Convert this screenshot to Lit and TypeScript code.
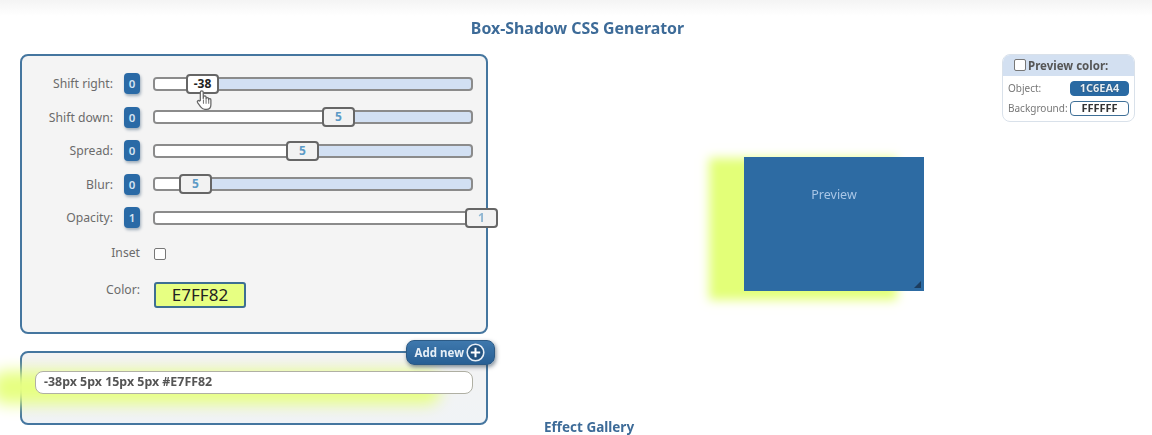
import { LitElement, html, css } from "lit";
import { customElement } from "lit/decorators.js";

const sliders = [
  { label: "Shift right:", badge: "0", value: "-38", left: 33, active: true },
  { label: "Shift down:", badge: "0", value: "5", left: 169 },
  { label: "Spread:", badge: "0", value: "5", left: 133 },
  { label: "Blur:", badge: "0", value: "5", left: 26 },
  { label: "Opacity:", badge: "1", value: "1", left: 312, faint: true },
];

@customElement("app-root")
export class AppRoot extends LitElement {
  static styles = css`
    :host {
      display: block;
      width: 1152px;
      height: 435px;
      overflow: hidden;
      background: #fff;
      font-family: "Noto Sans", "Open Sans", sans-serif;
      color: #666;
    }
    * { box-sizing: border-box; }
    .page { height: 435px; filter: blur(0.35px); background: linear-gradient(#f4f4f4 0, #fff 16px); background-repeat: no-repeat; }
    .title {
      height: 54px;
      padding: 18px 0 0 3px;
      text-align: center;
      font-size: 15.9px;
      line-height: 20px;
      font-weight: 700;
      color: #3d6b98;
    }
    .main { display: flex; }
    .left { width: 468px; margin-left: 20px; flex: none; }
    .panel {
      position: relative;
      background: #f4f4f4;
      border: 2px solid #45769f;
      border-radius: 8px;
    }
    .controls { height: 280px; padding-top: 11px; }
    .row {
      display: grid;
      grid-template-columns: 91px 16px 320px;
      column-gap: 11px;
      height: 33.5px;
      align-items: center;
    }
    .row > .track { margin-left: 2px; }
    .label { text-align: right; font-size: 12.2px; line-height: 16px; padding-top: 1px; color: #6b6b6b; }
    .badge {
      width: 16px;
      height: 21px;
      border-radius: 4px;
      background: #2a6aa6;
      color: #d5e4f2;
      font-size: 11.5px;
      font-weight: 600;
      line-height: 21px;
      text-align: center;
      box-shadow: 1px 2px 3px rgba(60, 90, 120, 0.45);
    }
    .track {
      position: relative;
      width: 320px;
      height: 14px;
      border: 2px solid #8b8b8b;
      border-radius: 4px;
      background: #d2e0f3;
    }
    .fill { height: 100%; background: #fff; border-radius: 2px 0 0 2px; }
    .thumb {
      position: absolute;
      top: -5px;
      width: 33px;
      height: 20px;
      border: 2px solid #666;
      border-radius: 4px;
      background: #f2f2f2;
      color: #5d9ac6;
      font-size: 12px;
      font-weight: 700;
      line-height: 16px;
      text-align: center;
    }
    .thumb.active { background: #fff; color: #222; }
    .thumb.faint { color: #8fb6d2; }
    .hand { position: absolute; left: 7px; top: 13px; width: 19px; height: 22px; }
    .extra {
      display: grid;
      grid-template-columns: 118px auto;
      column-gap: 13px;
      align-items: center;
      height: 35px;
    }
    .check {
      width: 12px;
      height: 12px;
      border: 1.5px solid #777;
      border-radius: 2px;
      background: #fff;
      margin-left: 1px;
      margin-top: 3px;
    }
    .color-row { margin-top: 12.5px; height: 26px; align-items: start; }
    .color-row .label { line-height: 14px; }
    .color-box {
      width: 92px;
      height: 26px;
      margin-left: 1px;
      background: #e7ff82;
      border: 2px solid #3d6f92;
      border-radius: 3px;
      color: #222;
      font-size: 17px;
      line-height: 22px;
      text-align: center;
    }
    .code-panel { margin-top: 17px; height: 74px; padding: 18px 13px 0; background: linear-gradient(#f3f3f3, #f0f3f6); }
    .code {
      width: 438px;
      height: 23px;
      padding-left: 8px;
      border: 1.5px solid #b0b0a4;
      border-radius: 8px;
      background: #fff;
      color: #555;
      font-size: 12.4px;
      font-weight: 700;
      line-height: 20px;
      box-shadow: -38px 5px 15px 5px #e7ff82;
    }
    .add {
      position: absolute;
      left: 384px;
      top: -13px;
      display: flex;
      align-items: center;
      justify-content: flex-end;
      gap: 2px;
      width: 89px;
      height: 25px;
      padding-right: 9px;
      border: 1px solid #2c5a85;
      border-radius: 8px;
      background: linear-gradient(#3e78ad, #285f94);
      color: #e6eef6;
      font-size: 11.5px;
      font-weight: 700;
      box-shadow: 1px 2px 4px rgba(40, 60, 80, 0.6);
    }
    .plus { width: 19px; height: 19px; flex: none; }
    .right { position: relative; flex: 1; }
    .picker {
      width: 133px;
      height: 68px;
      margin-left: 514px;
      border: 1px solid #d9e1ea;
      border-radius: 8px;
      background: #fff;
      overflow: hidden;
    }
    .picker-head {
      display: flex;
      align-items: center;
      height: 21px;
      padding-left: 11px;
      background: #d3e0f1;
      color: #555;
      font-size: 11.5px;
      font-weight: 700;
    }
    .picker-head .check { margin: 0 2px 2px 0; flex: none; }
    .picker-row { display: flex; justify-content: space-between; align-items: center; height: 20px; padding: 0 5px; font-size: 10px; color: #777; }
    .picker-head + .picker-row { margin-top: 2px; }
    .swatch {
      width: 59px;
      height: 15px;
      border-radius: 4px;
      border: 1.5px solid #3e6f97;
      background: #fff;
      color: #333;
      font-size: 11px;
      font-weight: 700;
      line-height: 12px;
      text-align: center;
    }
    .swatch.blue { background: #2a6aa3; border-color: #2a6aa3; color: #e4eef6; text-shadow: 0 0 1px #123; }
    .preview {
      position: relative;
      width: 180px;
      height: 134px;
      margin: 35px 0 0 256px;
      padding-top: 29px;
      background: #2d6ba3;
      color: #a9c6e6;
      font-size: 12.5px;
      line-height: 18px;
      text-align: center;
      box-shadow: -31px 5px 10px 4px #e3ff78;
    }
    .grip { position: absolute; right: 3px; bottom: 3px; width: 7px; height: 7px; }
    .gallery {
      margin-top: -6px;
      padding-left: 544px;
      font-size: 13.5px;
      line-height: 16px;
      font-weight: 700;
      color: #3d6b98;
      white-space: nowrap;
    }
  `;

  private hand() {
    return html`<svg class="hand" viewBox="0 0 18 21" aria-hidden="true">
      <path d="M5 11V3.2a1.4 1.4 0 0 1 2.8 0V9l.2-1.6a1.3 1.3 0 0 1 2.5.2V9.500a1.200 1.200 0 0 1 2.400 0v.8a1.100 1.100 0 0 1 2.200.2v4.500c0 2.500-1.600 4.500-4.300 4.500H9.300c-1.800 0-2.800-.8-3.800-2.300L2.400 13c-.9-1.300.8-2.700 1.900-1.500z"
        fill="#fff" stroke="#666" stroke-width="1.200" stroke-linejoin="round"/>
      <path d="M8 10v4M10.500 10v4M13 10.500V14" stroke="#777" stroke-width="1" fill="none"/>
    </svg>`;
  }

  render() {
    return html`<div class="page">
      <div class="title">Box-Shadow CSS Generator</div>
      <div class="main">
        <div class="left">
          <div class="panel controls">
            ${sliders.map(
              (s) => html`<div class="row">
                <div class="label">${s.label}</div>
                <div class="badge">${s.badge}</div>
                <div class="track">
                  <div class="fill" style="width:${s.left + 16}px"></div>
                  <div class="thumb ${s.active ? "active" : ""} ${s.faint ? "faint" : ""}" style="left:${s.left - 2}px">
                    ${s.value}${s.active ? this.hand() : ""}
                  </div>
                </div>
              </div>`
            )}
            <div class="extra">
              <div class="label">Inset</div>
              <div class="check"></div>
            </div>
            <div class="extra color-row">
              <div class="label">Color:</div>
              <div class="color-box">E7FF82</div>
            </div>
          </div>
          <div class="panel code-panel">
            <div class="code">-38px 5px 15px 5px #E7FF82</div>
            <div class="add">
              Add new
              <svg class="plus" viewBox="0 0 19 19" aria-hidden="true">
                <circle cx="9.500" cy="9.500" r="8.300" fill="#22527f" stroke="#e6eef6" stroke-width="1.600"/>
                <path d="M9.500 4.800v9.400M4.800 9.500h9.400" stroke="#fff" stroke-width="2"/>
              </svg>
            </div>
          </div>
        </div>
        <div class="right">
          <div class="picker">
            <div class="picker-head"><div class="check"></div>Preview color:</div>
            <div class="picker-row"><span>Object:</span><div class="swatch blue">1C6EA4</div></div>
            <div class="picker-row"><span>Background:</span><div class="swatch">FFFFFF</div></div>
          </div>
          <div class="preview">
            Preview
            <svg class="grip" viewBox="0 0 7 7" aria-hidden="true"><path d="M7 0V7H0z" fill="#1d3d5e"/></svg>
          </div>
        </div>
      </div>
      <div class="gallery">Effect Gallery</div>
    </div>`;
  }
}
